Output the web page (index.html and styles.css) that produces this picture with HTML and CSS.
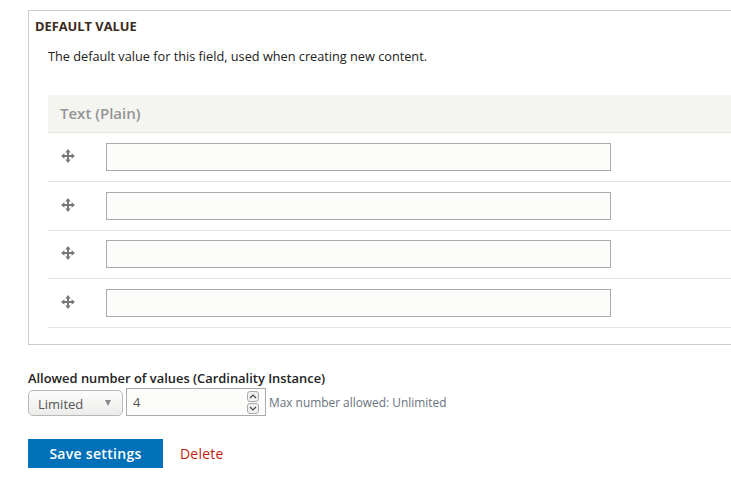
FILE: index.html
```html
<!DOCTYPE html>
<html lang="en">
<head>
<meta charset="utf-8">
<title>Default value</title>
<link rel="stylesheet" href="styles.css">
</head>
<body>
<main class="page">
  <section class="panel">
    <h2 class="panel-title">DEFAULT VALUE</h2>
    <p class="panel-desc">The default value for this field, used when creating new content.</p>
    <div class="table">
      <div class="table-head">Text (Plain)</div>
      <div class="row">
        <svg class="handle" viewBox="0 0 14 14" width="14" height="14"><path d="M7 0 9.7 3.4H8V6H10.6V4.3L14 7 10.6 9.7V8H8V10.6H9.7L7 14 4.3 10.6H6V8H3.4V9.7L0 7 3.4 4.3V6H6V3.4H4.3Z"/></svg>
        <input class="text-input" type="text">
      </div>
      <div class="row">
        <svg class="handle" viewBox="0 0 14 14" width="14" height="14"><path d="M7 0 9.7 3.4H8V6H10.6V4.3L14 7 10.6 9.7V8H8V10.6H9.7L7 14 4.3 10.6H6V8H3.4V9.7L0 7 3.4 4.3V6H6V3.4H4.3Z"/></svg>
        <input class="text-input" type="text">
      </div>
      <div class="row">
        <svg class="handle" viewBox="0 0 14 14" width="14" height="14"><path d="M7 0 9.7 3.4H8V6H10.6V4.3L14 7 10.6 9.7V8H8V10.6H9.7L7 14 4.3 10.6H6V8H3.4V9.7L0 7 3.4 4.3V6H6V3.4H4.3Z"/></svg>
        <input class="text-input" type="text">
      </div>
      <div class="row">
        <svg class="handle" viewBox="0 0 14 14" width="14" height="14"><path d="M7 0 9.7 3.4H8V6H10.6V4.3L14 7 10.6 9.7V8H8V10.6H9.7L7 14 4.3 10.6H6V8H3.4V9.7L0 7 3.4 4.3V6H6V3.4H4.3Z"/></svg>
        <input class="text-input" type="text">
      </div>
    </div>
  </section>
  <div class="field">
    <div class="field-label">Allowed number of values (Cardinality Instance)</div>
    <div class="field-controls">
      <div class="select"><span>Limited</span><span class="caret"></span></div>
      <div class="number">
        <span>4</span>
        <div class="spinner">
          <span class="spin"><svg viewBox="0 0 8 5" width="8" height="5"><path d="M1 4 4 1 7 4"/></svg></span>
          <span class="spin"><svg viewBox="0 0 8 5" width="8" height="5"><path d="M1 1 4 4 7 1"/></svg></span>
        </div>
      </div>
      <span class="hint">Max number allowed: Unlimited</span>
    </div>
  </div>
  <div class="actions">
    <button class="save" type="button">Save settings</button>
    <a class="delete" href="#">Delete</a>
  </div>
</main>
</body>
</html>
```
FILE: styles.css
```css
html, body {
  margin: 0;
  padding: 0;
  background: #fff;
  overflow: hidden;
}
body {
  height: 485px;
  font-family: "Open Sans", sans-serif;
  color: #222;
}
.page {
  width: 760px;
  padding: 10px 0 0 28px;
  box-sizing: border-box;
}
.panel {
  border: 1px solid #ccc;
  box-sizing: border-box;
  height: 335px;
  padding: 7px 0 0 6px;
}
.panel-title {
  margin: 0;
  font-size: 12.85px;
  font-weight: 700;
  line-height: 17px;
  color: #3b2a20;
}
.panel-desc {
  margin: 12px 0 0 13px;
  font-size: 12.73px;
  line-height: 18px;
  color: #222;
}
.table {
  margin: 30px 0 0 13px;
}
.table-head {
  height: 37px;
  line-height: 37px;
  padding-left: 12px;
  background: #f4f4f1;
  border-bottom: 1px solid #e6e4df;
  font-size: 15px;
  font-weight: 600;
  color: #959595;
}
.row {
  display: flex;
  align-items: center;
  height: 48.75px;
  box-sizing: border-box;
  border-bottom: 1px solid #e6e4df;
  padding-left: 13px;
}
.handle {
  fill: #777;
  margin-right: 31px;
  margin-top: -2px;
}
.text-input {
  width: 505px;
  height: 28px;
  box-sizing: border-box;
  border: 1px solid #aaa;
  border-radius: 0;
  background: #fcfcfa;
  padding: 0;
  margin: 0;
  outline: none;
}
.field {
  margin-top: 24px;
}
.field-label {
  font-size: 12.9px;
  font-weight: 600;
  line-height: 18px;
  margin-bottom: 1px;
  color: #222;
}
.field-controls {
  display: flex;
  align-items: flex-start;
  font-size: 12.35px;
}
.select {
  width: 95px;
  height: 26px;
  margin-top: 2px;
  box-sizing: border-box;
  display: flex;
  align-items: center;
  justify-content: space-between;
  padding: 2px 11px 0 9px;
  border: 1px solid #b8b8b8;
  border-radius: 5px;
  background: linear-gradient(#fdfdfd, #ececea);
  font-size: 13px;
  color: #555;
}
.caret {
  width: 0;
  height: 0;
  border-left: 3.5px solid transparent;
  border-right: 3.5px solid transparent;
  border-top: 6px solid #888;
  margin-top: -2px;
}
.number {
  width: 140px;
  height: 28px;
  margin-left: 3px;
  box-sizing: border-box;
  display: flex;
  align-items: center;
  justify-content: space-between;
  padding: 0 0 0 6px;
  border: 1px solid #aaa;
  background: #fcfcfa;
  font-size: 13px;
  color: #555;
}
.spinner {
  display: flex;
  flex-direction: column;
  gap: 1px;
  margin-right: 6px;
}
.spin {
  width: 12px;
  height: 11px;
  box-sizing: border-box;
  display: flex;
  align-items: center;
  justify-content: center;
  border: 1px solid #aaa;
  border-radius: 3px;
  background: #f0f0ee;
}
.spin svg {
  fill: none;
  stroke: #444;
  stroke-width: 1.2;
}
.hint {
  margin-left: 3px;
  line-height: 28px;
  color: #68737d;
  font-size: 11.9px;
}
.actions {
  display: flex;
  align-items: center;
  margin-top: 23px;
}
.save {
  width: 135px;
  height: 29px;
  padding: 0;
  border: 0;
  background: #0071b8;
  color: #fff;
  font-family: inherit;
  font-size: 14px;
  font-weight: 600;
  letter-spacing: 0.3px;
}
.delete {
  margin-left: 17px;
  font-size: 14px;
  color: #c41c0c;
  text-decoration: none;
  letter-spacing: 0.2px;
}
```
